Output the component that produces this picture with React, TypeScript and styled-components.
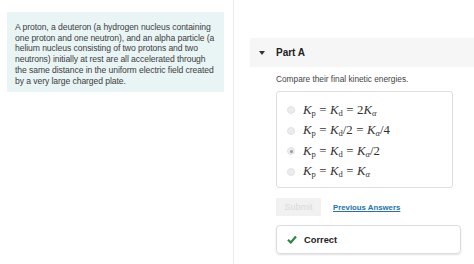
import styled, { createGlobalStyle } from 'styled-components';

const GlobalStyle = createGlobalStyle`
  html, body {
    margin: 0;
    padding: 0;
    background: #fff;
    font-family: "Liberation Sans", Arial, sans-serif;
  }
`;

const Page = styled.div`
  display: flex;
  width: 474px;
  height: 264px;
  overflow: hidden;
`;

const LeftCol = styled.div`
  width: 234px;
  flex-shrink: 0;
  border-right: 1px solid #ececec;
  padding: 12px 9px 0 7px;
  box-sizing: border-box;
`;

const Problem = styled.div`
  background: #e9f4f5;
  padding: 10px 0 6px 8px;
  font-size: 8.6px;
  letter-spacing: -0.08px;
  line-height: 10.7px;
  color: #3d3d3d;
  white-space: nowrap;
`;

const RightCol = styled.div`
  flex: 1;
  padding: 38px 0 0 16px;
`;

const PartHeader = styled.div`
  height: 29px;
  background: #f6f6f6;
  display: flex;
  align-items: center;
  padding-left: 9px;
  font-size: 10px;
  font-weight: bold;
  color: #222;
`;

const Caret = styled.span`
  width: 0;
  height: 0;
  border-left: 3.5px solid transparent;
  border-right: 3.5px solid transparent;
  border-top: 4px solid #333;
  margin-right: 11px;
`;

const PartBody = styled.div`
  padding: 7px 0 0 26px;
`;

const Prompt = styled.div`
  font-size: 8.3px;
  color: #444;
`;

const Options = styled.div`
  margin-top: 7px;
  width: 177px;
  box-sizing: border-box;
  border: 1px solid #dedede;
  border-radius: 3px;
  padding: 8px 0 5px 10px;
`;

const OptionRow = styled.div`
  display: flex;
  align-items: center;
  height: 20.5px;
`;

const Radio = styled.span<{ checked?: boolean }>`
  width: 8px;
  height: 8px;
  border-radius: 50%;
  background: #ececec;
  border: 1px solid #e2e2e2;
  box-sizing: border-box;
  margin-right: 8px;
  display: flex;
  align-items: center;
  justify-content: center;

  &::after {
    content: '';
    width: 3px;
    height: 3px;
    border-radius: 50%;
    background: ${p => (p.checked ? '#999' : 'transparent')};
  }
`;

const Math = styled.span`
  font-family: "Liberation Serif", "Times New Roman", serif;
  font-size: 12.8px;
  color: #333;
  white-space: nowrap;

  i {
    font-style: italic;
  }

  sub {
    font-size: 8.5px;
    font-style: normal;
    vertical-align: -2px;
  }

  sub.a {
    font-style: italic;
  }
`;

const Op = styled.span`
  margin: 0 3.5px;
`;

const Actions = styled.div`
  display: flex;
  align-items: center;
  margin-top: 10px;
`;

const SubmitButton = styled.button`
  width: 45px;
  height: 18px;
  background: #f1f1f1;
  border: none;
  border-radius: 1px;
  color: #dadada;
  font-family: inherit;
  font-size: 9px;
  padding: 0;
`;

const PrevLink = styled.a`
  margin-left: 12px;
  font-size: 7.8px;
  font-weight: bold;
  color: #2572a3;
  text-decoration: underline;
`;

const Feedback = styled.div`
  margin-top: 9px;
  width: 185px;
  height: 29px;
  box-sizing: border-box;
  border: 1px solid #dcdcdc;
  border-radius: 4px;
  box-shadow: 0 1px 2px rgba(0, 0, 0, 0.12);
  display: flex;
  align-items: center;
  padding-left: 10px;
  font-size: 9.3px;
  font-weight: bold;
  color: #222;
`;

const Check = styled.svg`
  width: 10px;
  height: 9px;
  margin-right: 7px;
`;

const K = (sub: string, pre = '', post = '') => (
  <>
    {pre}
    <i>K</i>
    <sub className={sub === 'α' ? 'a' : undefined}>{sub}</sub>
    {post}
  </>
);

const options = [
  <>{K('p')}<Op>=</Op>{K('d')}<Op>=</Op>{K('α', '2')}</>,
  <>{K('p')}<Op>=</Op>{K('d', '', '/2')}<Op>=</Op>{K('α', '', '/4')}</>,
  <>{K('p')}<Op>=</Op>{K('d')}<Op>=</Op>{K('α', '', '/2')}</>,
  <>{K('p')}<Op>=</Op>{K('d')}<Op>=</Op>{K('α')}</>,
];

const problemLines = [
  'A proton, a deuteron (a hydrogen nucleus containing',
  'one proton and one neutron), and an alpha particle (a',
  'helium nucleus consisting of two protons and two',
  'neutrons) initially at rest are all accelerated through',
  'the same distance in the uniform electric field created',
  'by a very large charged plate.',
];

export default function App() {
  return (
    <>
      <GlobalStyle />
      <Page>
        <LeftCol>
          <Problem>
            {problemLines.map((l, i) => (
              <div key={i}>{l}</div>
            ))}
          </Problem>
        </LeftCol>
        <RightCol>
          <PartHeader>
            <Caret />
            Part A
          </PartHeader>
          <PartBody>
            <Prompt>Compare their final kinetic energies.</Prompt>
            <Options>
              {options.map((o, i) => (
                <OptionRow key={i}>
                  <Radio checked={i === 2} />
                  <Math>{o}</Math>
                </OptionRow>
              ))}
            </Options>
            <Actions>
              <SubmitButton>Submit</SubmitButton>
              <PrevLink>Previous Answers</PrevLink>
            </Actions>
            <Feedback>
              <Check viewBox="0 0 10 9">
                <path d="M1 4.8 L3.8 7.5 L9 1.5" fill="none" stroke="#2e8540" strokeWidth="2.2" />
              </Check>
              Correct
            </Feedback>
          </PartBody>
        </RightCol>
      </Page>
    </>
  );
}
